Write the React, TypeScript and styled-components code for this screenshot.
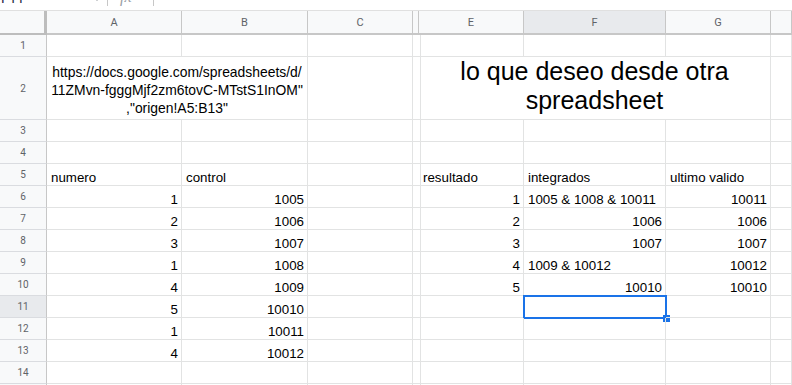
import React from 'react';
import styled, { createGlobalStyle } from 'styled-components';

const GlobalStyle = createGlobalStyle`
  html, body {
    margin: 0;
    padding: 0;
    background: #fff;
    overflow: hidden;
  }
  body {
    font-family: "Liberation Sans", Arial, sans-serif;
  }
`;

const Page = styled.div`
  width: 792px;
  height: 385px;
  overflow: hidden;
  display: flex;
  flex-direction: column;
`;

// only the bottom sliver of the formula bar is visible
const FormulaBar = styled.div`
  box-sizing: border-box;
  height: 11px;
  flex-shrink: 0;
  border-bottom: 1px solid #e0e0e0;
  display: flex;
  align-items: flex-start;
  overflow: hidden;
`;

const NameBox = styled.div`
  width: 90px;
  padding-left: 1px;
  margin-top: -12px;
  font-family: Roboto, sans-serif;
  font-size: 14px;
  line-height: 20px;
  color: #1f2a44;
`;

const DropArrow = styled.div`
  width: 0;
  height: 0;
  margin: -3px 0 0 3px;
  border-left: 3px solid transparent;
  border-right: 3px solid transparent;
  border-top: 4px solid #80868b;
`;

const Divider = styled.div<{ $gap: number }>`
  width: 1px;
  height: 20px;
  margin: -14px 0 0 ${(p) => p.$gap}px;
  background: #c7c7c7;
`;

const Fx = styled.div`
  margin: -13px 0 0 12px;
  width: 33px;
  font-family: "Liberation Serif", serif;
  font-style: italic;
  font-size: 16px;
  line-height: 20px;
  color: #9aa0a6;
`;

const Grid = styled.div`
  display: grid;
  grid-template-columns: 47px 135px 126px 105px 6px 105px 142px 105px 1fr;
  grid-template-rows: 24px 22px 63px;
  grid-auto-rows: 22px;
`;

const Corner = styled.div`
  box-sizing: border-box;
  background: #f8f9fa;
  border-right: 3px solid #bdbdbd;
  border-bottom: 2px solid #bdbdbd;
`;

const ColHeader = styled.div<{ $active?: boolean }>`
  box-sizing: border-box;
  display: flex;
  align-items: center;
  justify-content: center;
  background: ${(p) => (p.$active ? '#e8eaed' : '#f8f9fa')};
  border-right: 1px solid #c7c7c7;
  border-bottom: 2px solid #c7c7c7;
  font-family: Roboto, sans-serif;
  font-size: 11px;
  color: #5f6368;
`;

const RowHeader = styled.div<{ $active?: boolean }>`
  box-sizing: border-box;
  display: flex;
  align-items: center;
  justify-content: center;
  background: ${(p) => (p.$active ? '#e8eaed' : '#f8f9fa')};
  border-right: 1px solid #c7c7c7;
  border-bottom: 1px solid #dadce0;
  font-family: Roboto, sans-serif;
  font-size: 10px;
  color: #5f6368;
`;

const Cell = styled.div<{ $align: 'left' | 'right' }>`
  position: relative;
  box-sizing: border-box;
  display: flex;
  align-items: flex-end;
  justify-content: ${(p) => (p.$align === 'right' ? 'flex-end' : 'flex-start')};
  padding: 0 3px 0 4px;
  border-right: 1px solid #e2e3e3;
  border-bottom: 1px solid #e2e3e3;
  font-size: 13.333px;
  line-height: 15px;
  color: #000;
  white-space: nowrap;
`;

const MergedCell = styled.div<{ $span: number; $size: number; $lh: number; $pb: number }>`
  grid-column: span ${(p) => p.$span};
  box-sizing: border-box;
  display: flex;
  flex-direction: column;
  align-items: center;
  justify-content: flex-end;
  padding-bottom: ${(p) => p.$pb}px;
  border-right: 1px solid #e2e3e3;
  border-bottom: 1px solid #e2e3e3;
  font-size: ${(p) => p.$size}px;
  line-height: ${(p) => p.$lh}px;
  color: #000;
  white-space: nowrap;
  text-align: center;
`;

const Selection = styled.div`
  position: absolute;
  top: -1px;
  left: -1px;
  right: -2px;
  bottom: -2px;
  border: 2px solid #1a73e8;
  pointer-events: none;
`;

const Handle = styled.div`
  position: absolute;
  right: -5px;
  bottom: -5px;
  width: 7px;
  height: 7px;
  background: #1a73e8;
`;

type Value = string | number | null;

const COLUMNS = ['A', 'B', 'C', 'D', 'E', 'F', 'G', 'H'];
const HEADER_LABELS = ['A', 'B', 'C', '', 'E', 'F', 'G', ''];

const data: Record<number, Value[]> = {
  5: ['numero', 'control', null, null, 'resultado', 'integrados', 'ultimo valido'],
  6: [1, 1005, null, null, 1, '1005 & 1008 & 10011', 10011],
  7: [2, 1006, null, null, 2, 1006, 1006],
  8: [3, 1007, null, null, 3, 1007, 1007],
  9: [1, 1008, null, null, 4, '1009 & 10012', 10012],
  10: [4, 1009, null, null, 5, 10010, 10010],
  11: [5, 10010],
  12: [1, 10011],
  13: [4, 10012],
};

const ROW_COUNT = 15;
const SELECTED = { row: 11, col: 'F' };

const App = () => {
  const rows = Array.from({ length: ROW_COUNT }, (_, i) => i + 1);

  return (
    <Page>
      <GlobalStyle />
      <FormulaBar>
        <NameBox>F11</NameBox>
        <DropArrow />
        <Divider $gap={7} />
        <Fx>fx</Fx>
        <Divider $gap={0} />
      </FormulaBar>
      <Grid>
        <Corner />
        {HEADER_LABELS.map((label, i) => (
          <ColHeader key={COLUMNS[i]} $active={COLUMNS[i] === SELECTED.col}>
            {label}
          </ColHeader>
        ))}

        {rows.map((r) =>
          r === 2 ? (
            <React.Fragment key={r}>
              <RowHeader>{r}</RowHeader>
              <MergedCell $span={2} $size={13.9} $lh={18} $pb={2}>
                <span>https://docs.google.com/spreadsheets/d/</span>
                <span>11ZMvn-fgggMjf2zm6tovC-MTstS1InOM"</span>
                <span>,"origen!A5:B13"</span>
              </MergedCell>
              <Cell $align="left" />
              <Cell $align="left" />
              <MergedCell $span={3} $size={25} $lh={29} $pb={4}>
                <span>lo que deseo desde otra</span>
                <span>spreadsheet</span>
              </MergedCell>
              <Cell $align="left" />
            </React.Fragment>
          ) : (
            <React.Fragment key={r}>
              <RowHeader $active={r === SELECTED.row}>{r}</RowHeader>
              {COLUMNS.map((c, i) => {
                const v = data[r]?.[i] ?? null;
                const selected = r === SELECTED.row && c === SELECTED.col;
                return (
                  <Cell key={c} $align={typeof v === 'number' ? 'right' : 'left'}>
                    {v}
                    {selected && (
                      <Selection>
                        <Handle />
                      </Selection>
                    )}
                  </Cell>
                );
              })}
            </React.Fragment>
          )
        )}
      </Grid>
    </Page>
  );
};

export default App;
